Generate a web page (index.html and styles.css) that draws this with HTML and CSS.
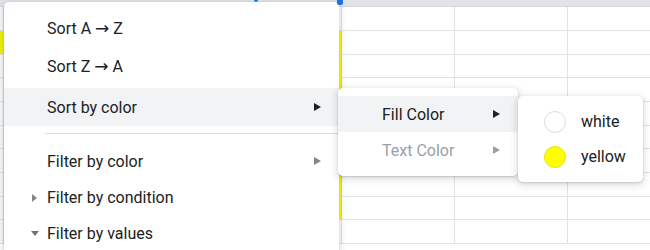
FILE: index.html
```html
<!DOCTYPE html>
<html lang="en">
<head>
    <meta charset="UTF-8">
    <meta name="viewport" content="width=device-width, initial-scale=1.0">
    <title>Sort and filter menu</title>
    <link rel="stylesheet" href="styles.css">
</head>
<body>
    <!-- Spreadsheet behind the menus -->
    <div class="sheet">
        <div class="col-head"></div>
        <div class="row first"><div class="cell rh"></div><div class="cell ca"></div><div class="cell cb"></div><div class="cell cb"></div><div class="cell cb"></div></div>
        <div class="row"><div class="cell rh fill"></div><div class="cell ca fill"></div><div class="cell cb"></div><div class="cell cb"></div><div class="cell cb"></div></div>
        <div class="row"><div class="cell rh"></div><div class="cell ca fill"></div><div class="cell cb"></div><div class="cell cb"></div><div class="cell cb"></div></div>
        <div class="row"><div class="cell rh"></div><div class="cell ca fill"></div><div class="cell cb"></div><div class="cell cb"></div><div class="cell cb"></div></div>
        <div class="row"><div class="cell rh"></div><div class="cell ca fill"></div><div class="cell cb"></div><div class="cell cb"></div><div class="cell cb"></div></div>
        <div class="row"><div class="cell rh"></div><div class="cell ca fill"></div><div class="cell cb"></div><div class="cell cb"></div><div class="cell cb"></div></div>
        <div class="row"><div class="cell rh"></div><div class="cell ca fill"></div><div class="cell cb"></div><div class="cell cb"></div><div class="cell cb"></div></div>
        <div class="row"><div class="cell rh"></div><div class="cell ca fill"></div><div class="cell cb"></div><div class="cell cb"></div><div class="cell cb"></div></div>
        <div class="row"><div class="cell rh"></div><div class="cell ca fill"></div><div class="cell cb"></div><div class="cell cb"></div><div class="cell cb"></div></div>
        <div class="row"><div class="cell rh"></div><div class="cell ca"></div><div class="cell cb"></div><div class="cell cb"></div><div class="cell cb"></div></div>
    </div>

    <!-- Main sort / filter menu -->
    <div class="menu main-menu">
        <div class="item"><span>Sort A <span class="to">→</span> Z</span></div>
        <div class="item"><span>Sort Z <span class="to">→</span> A</span></div>
        <div class="item active lower">
            <span>Sort by color</span>
            <svg class="arrow" width="7" height="8" viewBox="0 0 7 8"><polygon points="0,0 7,4 0,8" fill="#202124"/></svg>
        </div>
        <div class="separator"></div>
        <div class="item short">
            <span>Filter by color</span>
            <svg class="arrow" width="7" height="8" viewBox="0 0 7 8"><polygon points="0,0 7,4 0,8" fill="#80868b"/></svg>
        </div>
        <div class="item short">
            <svg class="toggle" width="5" height="8" viewBox="0 0 5 8"><polygon points="0,0 5,4 0,8" fill="#80868b"/></svg>
            <span>Filter by condition</span>
        </div>
        <div class="item short">
            <svg class="toggle down" width="8" height="5" viewBox="0 0 8 5"><polygon points="0,0 8,0 4,5" fill="#70757a"/></svg>
            <span>Filter by values</span>
        </div>
    </div>

    <!-- Sort by color submenu -->
    <div class="menu sub-menu">
        <div class="item short active">
            <span>Fill Color</span>
            <svg class="arrow" width="7" height="8" viewBox="0 0 7 8"><polygon points="0,0 7,4 0,8" fill="#202124"/></svg>
        </div>
        <div class="item short disabled">
            <span>Text Color</span>
            <svg class="arrow" width="7" height="8" viewBox="0 0 7 8"><polygon points="0,0 7,4 0,8" fill="#9aa0a6"/></svg>
        </div>
    </div>

    <!-- Fill color choices -->
    <div class="menu color-menu">
        <div class="swatch-item"><span class="swatch white"></span>white</div>
        <div class="swatch-item"><span class="swatch yellow"></span>yellow</div>
    </div>

    <div class="handle"></div>
    <div class="handle small"></div>
</body>
</html>
```

FILE: styles.css
```css
body {
    margin: 0;
    width: 650px;
    height: 250px;
    overflow: hidden;
    position: relative;
    font-family: Roboto, "Liberation Sans", Arial, sans-serif;
    font-size: 16px;
    color: #202124;
    background-color: white;
}

/* sheet grid */
.sheet {
    display: flex;
    flex-direction: column;
    height: 250px;
    overflow: hidden;
}

.col-head {
    flex-shrink: 0;
    height: 6px;
    background-color: #e1e3e9;
    border-bottom: 1px solid #d4d6dc;
}

.row {
    display: flex;
    flex-shrink: 0;
    height: 23.67px;
    box-sizing: border-box;
}

.row.first {
    height: 24px;
}

.cell {
    flex-shrink: 0;
    border-right: 1px solid #e2e2e2;
    border-bottom: 1px solid #e2e2e2;
    box-sizing: border-box;
}

.rh {
    width: 4px;
    background-color: #f8f9fa;
    border-right-color: #d9d9d9;
}

.ca {
    width: 338px;
}

.cb {
    width: 113px;
}

.fill {
    background-color: #ffff00;
}

.ca.fill {
    border-right-color: #e6e600;
}

.rh.fill {
    background-color: #f1f300;
}

.handle {
    position: absolute;
    left: 337px;
    top: 0;
    width: 6px;
    height: 5px;
    background-color: #1a73e8;
    border-radius: 0 0 2px 2px;
}

.handle.small {
    left: 254px;
    width: 4px;
    height: 2px;
}

/* menus */
.menu {
    position: absolute;
    background-color: white;
    border-radius: 5px;
    box-shadow: 0 2px 6px 2px rgba(60, 64, 67, 0.15), 0 1px 2px rgba(60, 64, 67, 0.2);
    box-sizing: border-box;
}

.main-menu {
    left: 4px;
    top: 2px;
    width: 335px;
    height: 248px;
    padding-top: 7px;
    border-radius: 5px 5px 0 0;
}

.item {
    position: relative;
    display: flex;
    align-items: center;
    justify-content: space-between;
    height: 38px;
    padding: 0 18px 0 43px;
    white-space: nowrap;
}

.to {
    font-family: "DejaVu Sans", sans-serif;
    font-size: 17px;
}

.item.lower {
    margin-top: 3px;
}

.item.short {
    height: 36px;
}

.item.active {
    background-color: #f1f3f4;
}

.item.disabled {
    color: #9aa0a6;
}

.separator {
    height: 1px;
    margin: 7px 0 9px 41px;
    background-color: #dadce0;
}

.toggle {
    position: absolute;
    left: 28px;
    top: 15px;
}

.toggle.down {
    left: 27px;
    top: 16px;
}

.item .toggle + span {
    margin-right: auto;
}

.sub-menu {
    left: 338px;
    top: 88px;
    width: 180px;
    padding: 8px 0;
}

.sub-menu .item {
    padding-left: 44px;
}

.color-menu {
    left: 518px;
    top: 96px;
    width: 125px;
    padding: 8px 0;
}

.swatch-item {
    display: flex;
    align-items: center;
    height: 35px;
    padding-left: 26px;
}

.swatch {
    width: 22px;
    height: 22px;
    border-radius: 50%;
    box-sizing: border-box;
    margin-right: 15px;
}

.swatch.white {
    background-color: white;
    border: 1px solid #dadce0;
}

.swatch.yellow {
    background-color: #ffff00;
    border: 1px solid #e8e800;
}
```
